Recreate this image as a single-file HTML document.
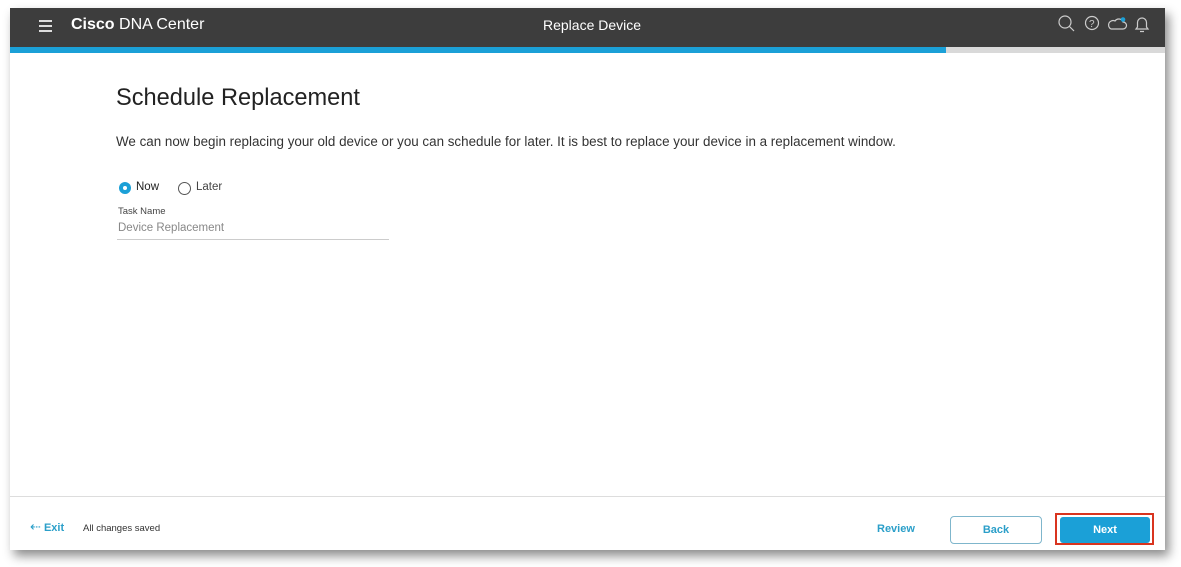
<!DOCTYPE html>
<html><head><style>
body{margin:0;width:1181px;height:567px;background:#fff;position:relative;overflow:hidden;font-family:"Liberation Sans",sans-serif}
.win{position:absolute;left:10px;top:8px;width:1155px;height:542px;background:#fff;box-shadow:4px 6px 10px rgba(0,0,0,.45)}
.hdr{position:absolute;left:0;top:0;width:1155px;height:39px;background:#3d3d3d;color:#fff}
.prog{position:absolute;left:0;top:39px;width:1155px;height:6px;background:#d9d9d9}
.prog div{width:936px;height:6px;background:#1ba0d7}
.t{position:absolute;white-space:nowrap}
</style></head><body>
<div class="win">
<div class="hdr">
 <div class="t" style="left:29px;top:12px;width:13px;height:2px;background:#ddd;box-shadow:0 5px 0 #ddd,0 10px 0 #ddd"></div>
 <div class="t" style="left:61px;top:8px;font-size:16px"><b>Cisco</b> DNA Center</div>
 <div class="t" style="left:533px;top:9px;font-size:14px">Replace Device</div>
 <svg class="t" style="left:1047px;top:6px" width="100" height="22" fill="none" stroke="#ccc" stroke-width="1.2">
  <circle cx="8" cy="8" r="6"/><path d="M12.5 12.5l4.5 4.5"/>
  <circle cx="35" cy="9" r="6.5"/><text x="32" y="13" font-size="10" fill="#ccc" stroke="none" font-family="Liberation Sans">?</text>
  <path d="M54 15h12a3.5 3.5 0 0 0 0-7 4.5 4.5 0 0 0-8-1 4 4 0 0 0-4 8z"/><circle cx="66" cy="5.5" r="2.3" fill="#1ba0d7" stroke="none"/>
  <path d="M79 15h12l-1.5-2v-4.5a4.5 4.5 0 0 0-9 0v4.5zM83 17.5h4"/>
 </svg>
</div>
<div class="prog"><div></div></div>
<div class="t" style="left:106px;top:77px;font-size:23.6px;color:#222">Schedule Replacement</div>
<div class="t" style="left:106px;top:126px;font-size:13.4px;color:#333">We can now begin replacing your old device or you can schedule for later. It is best to replace your device in a replacement window.</div>
<div class="t" style="left:109px;top:174px;width:12px;height:12px;border-radius:50%;background:#1ba0d7"><div style="margin:4px;width:4px;height:4px;border-radius:50%;background:#fff"></div></div>
<div class="t" style="left:126px;top:173px;font-size:11.5px;color:#222">Now</div>
<div class="t" style="left:168px;top:174px;width:11px;height:11px;border-radius:50%;border:1px solid #555"></div>
<div class="t" style="left:186px;top:173px;font-size:11.5px;color:#444">Later</div>
<div class="t" style="left:108px;top:198px;font-size:9.5px;color:#444">Task Name</div>
<div class="t" style="left:108px;top:214px;font-size:11.5px;color:#888">Device Replacement</div>
<div class="t" style="left:107px;top:231px;width:272px;height:1px;background:#ccc"></div>
<div class="t" style="left:0;top:488px;width:1155px;height:1px;background:#ddd"></div>
<div class="t" style="left:20px;top:511px;font-size:11px;color:#2b9fc9"><span style="font-size:13px">⇠</span> <b>Exit</b></div>
<div class="t" style="left:73px;top:515px;font-size:9.5px;color:#333">All changes saved</div>
<div class="t" style="left:867px;top:515px;font-size:11px;color:#2b9fc9;font-weight:bold">Review</div>
<div class="t" style="left:940px;top:508px;width:90px;height:26px;border:1px solid #7fb6cc;border-radius:4px;color:#2b9fc9;font-size:11px;font-weight:bold;text-align:center;line-height:26px">Back</div>
<div class="t" style="left:1045px;top:505px;width:99px;height:32px;border:2px solid #d9341f;box-sizing:border-box"></div>
<div class="t" style="left:1050px;top:509px;width:90px;height:26px;background:#1ba0d7;border-radius:3px;color:#fff;font-size:11px;font-weight:bold;text-align:center;line-height:26px">Next</div>
</div>
</body></html>
